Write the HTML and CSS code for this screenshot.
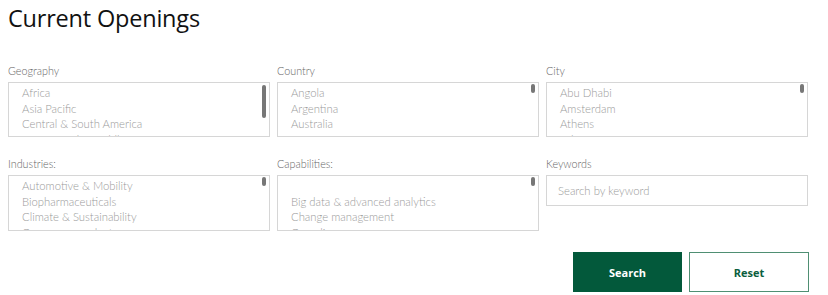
FILE: index.html
```html
<!DOCTYPE html>
<html>
<head>
<meta charset="utf-8">
<link rel="stylesheet" href="styles.css">
</head>
<body>
<div class="page">
  <h1 class="title">Current Openings</h1>
  <div class="grid">
    <div class="field">
      <div class="label">Geography</div>
      <div class="list">
        <div class="opt">Africa</div>
        <div class="opt">Asia Pacific</div>
        <div class="opt">Central &amp; South America</div>
        <div class="opt">Europe &amp; The Middle East</div>
        <span class="thumb thumb-long"></span>
      </div>
    </div>
    <div class="field">
      <div class="label">Country</div>
      <div class="list">
        <div class="opt">Angola</div>
        <div class="opt">Argentina</div>
        <div class="opt">Australia</div>
        <div class="opt">Austria</div>
        <span class="thumb"></span>
      </div>
    </div>
    <div class="field">
      <div class="label">City</div>
      <div class="list">
        <div class="opt">Abu Dhabi</div>
        <div class="opt">Amsterdam</div>
        <div class="opt">Athens</div>
        <div class="opt">Atlanta</div>
        <span class="thumb"></span>
      </div>
    </div>
    <div class="field">
      <div class="label">Industries:</div>
      <div class="list list-tall">
        <div class="opt">Automotive &amp; Mobility</div>
        <div class="opt">Biopharmaceuticals</div>
        <div class="opt">Climate &amp; Sustainability</div>
        <div class="opt">Consumer products</div>
        <span class="thumb"></span>
      </div>
    </div>
    <div class="field">
      <div class="label">Capabilities:</div>
      <div class="list list-tall">
        <div class="opt">&nbsp;</div>
        <div class="opt">Big data &amp; advanced analytics</div>
        <div class="opt">Change management</div>
        <div class="opt">Compliance</div>
        <span class="thumb"></span>
      </div>
    </div>
    <div class="field">
      <div class="label">Keywords</div>
      <div class="input">Search by keyword</div>
    </div>
  </div>
  <div class="actions">
    <button class="btn btn-search">Search</button>
    <button class="btn btn-reset">Reset</button>
  </div>
</div>
</body>
</html>
```
FILE: styles.css
```css
html, body {
  margin: 0;
  padding: 0;
  background: #ffffff;
}
.page {
  padding: 4px 20px 0 8px;
  font-family: "Open Sans", "Noto Sans", sans-serif;
}
.title {
  margin: 0;
  font-size: 23.5px;
  line-height: 29px;
  font-weight: 500;
  color: #111;
  letter-spacing: -0.2px;
}
.grid {
  margin-top: 31px;
  width: 800px;
  display: grid;
  grid-template-columns: 262px 262px 262px;
  column-gap: 7px;
  row-gap: 20px;
  align-items: start;
}
.label {
  font-family: Lato, "Open Sans", sans-serif;
  font-weight: 300;
  font-size: 10.8px;
  line-height: 14px;
  color: #666;
  margin-bottom: 4px;
}
.list {
  position: relative;
  height: 55px;
  box-sizing: border-box;
  border: 1px solid #d6d6d6;
  overflow: hidden;
  padding: 2px 0 0 13px;
}
.list-tall {
  height: 56px;
}
.opt {
  font-family: Lato, "Open Sans", sans-serif;
  font-weight: 300;
  font-size: 11.3px;
  line-height: 15.5px;
  color: #9a9a9a;
  white-space: nowrap;
}
.thumb {
  position: absolute;
  right: 3px;
  top: 1px;
  width: 4px;
  height: 9px;
  border-radius: 2px;
  background: #777;
}
.thumb-long {
  top: 2px;
  height: 33px;
}
.input {
  height: 31px;
  box-sizing: border-box;
  border: 1px solid #d6d6d6;
  padding: 0 11px;
  display: flex;
  align-items: center;
  font-family: Lato, "Open Sans", sans-serif;
  font-weight: 300;
  font-size: 11.3px;
  color: #9a9a9a;
}
.actions {
  width: 801px;
  margin-top: 21px;
  display: flex;
  justify-content: flex-end;
  gap: 7px;
}
.btn {
  height: 40px;
  box-sizing: border-box;
  font-family: "Open Sans", "Noto Sans", sans-serif;
  font-weight: 700;
  font-size: 11px;
  cursor: pointer;
  margin: 0;
}
.btn-search {
  width: 109px;
  background: #03593b;
  border: 1px solid #03593b;
  color: #ffffff;
}
.btn-reset {
  width: 120px;
  background: #ffffff;
  border: 1px solid #4f8f73;
  color: #0b5e3e;
}
```
